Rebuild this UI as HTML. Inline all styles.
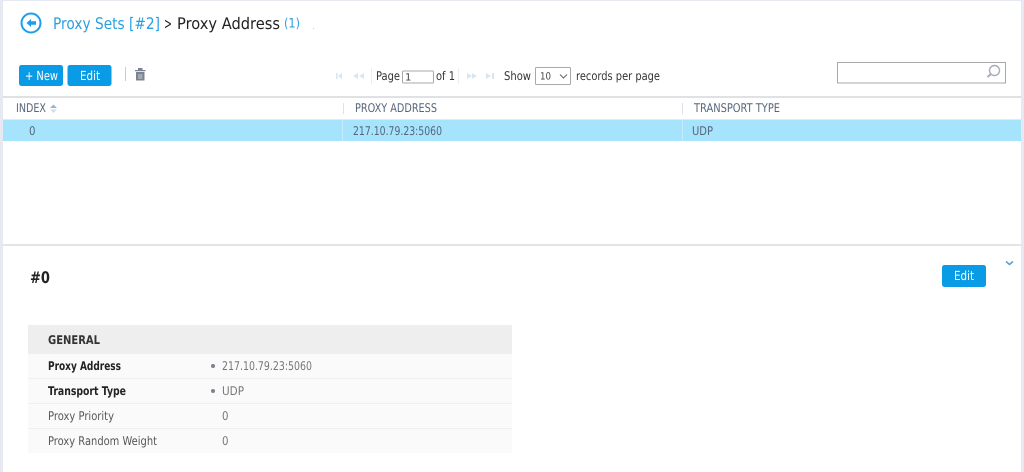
<!DOCTYPE html>
<html lang="en">
<head>
<meta charset="utf-8">
<title>Proxy Address</title>
<style>
html,body{margin:0;padding:0;width:1024px;height:472px;overflow:hidden;background:#fff}
svg{display:block}
text{font-family:"DejaVu Sans",sans-serif;font-size:12px;fill:#4f5b66;text-rendering:geometricPrecision}
.h{fill:#55657a}
.b{font-weight:bold;fill:#222;font-size:12px}
.w{fill:#fff;font-size:12.5px}
</style>
</head>
<body>
<svg width="1024" height="472" viewBox="0 0 1024 472" xmlns="http://www.w3.org/2000/svg">
<rect width="1024" height="472" fill="#fff"/>
<rect x="0" y="0" width="3" height="472" fill="#e6e9f2"/>
<rect x="0" y="0" width="1024" height="1" fill="#e6e9f2"/>
<rect x="1021" y="0" width="3" height="472" fill="#e6e9f2"/>

<circle cx="31" cy="23" r="9.500" fill="none" stroke="#1b9fe8" stroke-width="2"/>
<path d="M26.500 23 L31 19 V21.300 H36 V24.700 H31 V27 Z" fill="#1b9fe8"/>
<text x="53" y="29" style="font-size:16px;fill:#2a9fe0" textLength="107" lengthAdjust="spacingAndGlyphs">Proxy Sets [#2]</text>
<text x="164" y="29" style="font-size:16px;fill:#222" textLength="8" lengthAdjust="spacingAndGlyphs">&gt;</text>
<text x="177" y="29" style="font-size:16px;fill:#222" textLength="103" lengthAdjust="spacingAndGlyphs">Proxy Address</text>
<text x="284" y="27.500" style="font-size:13px;fill:#2a9fe0" textLength="16" lengthAdjust="spacingAndGlyphs">(1)</text>
<rect x="313" y="28" width="1" height="1" fill="#c8d0d8"/>

<rect x="19" y="65" width="44" height="21" rx="2.500" fill="#0a9be6"/>
<text class="w" x="25" y="80" textLength="33" lengthAdjust="spacingAndGlyphs">+ New</text>
<rect x="67.500" y="65" width="44" height="21" rx="2.500" fill="#0a9be6"/>
<text class="w" x="80" y="80" textLength="20" lengthAdjust="spacingAndGlyphs">Edit</text>
<rect x="125" y="67" width="1" height="14" fill="#c9ccd1"/>
<path d="M135 70H145.500V71.300H135Z M138 68H142.500V70H138Z" fill="#7b8391"/>
<rect x="136" y="72" width="8.500" height="8.500" fill="#7b8391"/>
<rect x="138" y="74" width="4.500" height="5" fill="#a3a9b4"/>

<g fill="#d9e6f1">
<path d="M336 73H337.500V79H336Z M338 76L342 73V79Z"/>
<path d="M353 76L358 73V79Z M359 76L364 73V79Z"/>
<path d="M467 73L472 76L467 79Z M472 73L477 76L472 79Z"/>
<path d="M486 73L491 76L486 79Z M492 73H494V79H492Z"/>
</g>
<rect x="371" y="68" width="1" height="16" fill="#eceef1"/>
<rect x="458" y="68" width="1" height="16" fill="#eceef1"/>
<text x="376" y="80" style="fill:#333" textLength="24" lengthAdjust="spacingAndGlyphs">Page</text>
<rect x="402.500" y="71" width="31" height="12" rx="1" fill="#fff" stroke="#a9a9a9"/>
<text x="405" y="80.500" style="font-size:10px;fill:#444">1</text>
<text x="436" y="80" style="fill:#333" textLength="19" lengthAdjust="spacingAndGlyphs">of 1</text>
<text x="504" y="80" style="fill:#333" textLength="27" lengthAdjust="spacingAndGlyphs">Show</text>
<rect x="535.500" y="67.500" width="35" height="17" rx="1" fill="#fff" stroke="#a9a9a9"/>
<text x="540" y="79.500" style="font-size:10px;fill:#444" textLength="11" lengthAdjust="spacingAndGlyphs">10</text>
<path d="M560 74.500L563.500 78L567 74.500" fill="none" stroke="#666" stroke-width="1"/>
<text x="576" y="80" style="fill:#333" textLength="84" lengthAdjust="spacingAndGlyphs">records per page</text>

<rect x="837.500" y="62.500" width="168" height="20.500" fill="#fff" stroke="#a9a9a9"/>
<circle cx="994.500" cy="70.500" r="5" fill="none" stroke="#a7adb8" stroke-width="1.400"/>
<path d="M990.800 74.200L987.500 77" stroke="#a7adb8" stroke-width="2" fill="none"/>

<rect x="3" y="96" width="1018" height="2" fill="#dfe1e5"/>
<rect x="3" y="119" width="1018" height="1" fill="#e8e8e8"/>
<text class="h" x="16" y="112" textLength="30" lengthAdjust="spacingAndGlyphs">INDEX</text>
<path d="M50 108L53.500 104.500L57 108Z" fill="#8fb8d8"/>
<path d="M50 109.500L53.500 113L57 109.500Z" fill="#d5dde6"/>
<rect x="343" y="103" width="1" height="11" fill="#dfe1e5"/>
<text class="h" x="355" y="112" textLength="82" lengthAdjust="spacingAndGlyphs">PROXY ADDRESS</text>
<rect x="682" y="103" width="1" height="11" fill="#dfe1e5"/>
<text class="h" x="694" y="112" textLength="86" lengthAdjust="spacingAndGlyphs">TRANSPORT TYPE</text>

<rect x="3" y="120" width="1018" height="21" fill="#a6e3fd"/>
<rect x="342" y="120" width="1" height="21" fill="#c5ecfd"/>
<rect x="682" y="120" width="1" height="21" fill="#c5ecfd"/>
<text x="29" y="135" class="h" textLength="6.500" lengthAdjust="spacingAndGlyphs">0</text>
<text x="353" y="135" class="h" textLength="89" lengthAdjust="spacingAndGlyphs">217.10.79.23:5060</text>
<text x="692" y="135" class="h" textLength="21" lengthAdjust="spacingAndGlyphs">UDP</text>

<rect x="3" y="244" width="1018" height="2" fill="#e4e4e4"/>
<text x="30" y="283" style="font-size:16px;font-weight:bold;fill:#222" textLength="20" lengthAdjust="spacingAndGlyphs">#0</text>
<rect x="942" y="265" width="44" height="22" rx="2.500" fill="#0a9be6"/>
<text class="w" x="954" y="280" textLength="20" lengthAdjust="spacingAndGlyphs">Edit</text>
<path d="M1006 261.500L1009.500 264.500L1013 261.500" fill="none" stroke="#5b9fd6" stroke-width="1.600"/>

<rect x="28" y="325" width="484" height="29" fill="#eeeeee"/>
<rect x="28" y="354" width="484" height="99" fill="#fafafa"/>
<rect x="28" y="378" width="484" height="1" fill="#f0f0f0"/>
<rect x="28" y="403" width="484" height="1" fill="#f0f0f0"/>
<rect x="28" y="428" width="484" height="1" fill="#f0f0f0"/>
<text x="48" y="344" style="font-weight:bold;fill:#333;font-size:12px" textLength="52" lengthAdjust="spacingAndGlyphs">GENERAL</text>
<text class="b" x="48" y="370" textLength="73" lengthAdjust="spacingAndGlyphs">Proxy Address</text>
<text class="b" x="48" y="395" textLength="78" lengthAdjust="spacingAndGlyphs">Transport Type</text>
<text x="48" y="420" style="fill:#555" textLength="66" lengthAdjust="spacingAndGlyphs">Proxy Priority</text>
<text x="48" y="445" style="fill:#555" textLength="109" lengthAdjust="spacingAndGlyphs">Proxy Random Weight</text>
<circle cx="213" cy="366" r="2" fill="#7b8391"/>
<circle cx="213" cy="391" r="2" fill="#7b8391"/>
<text x="222" y="370" style="fill:#777" textLength="90" lengthAdjust="spacingAndGlyphs">217.10.79.23:5060</text>
<text x="222" y="395" style="fill:#777" textLength="22" lengthAdjust="spacingAndGlyphs">UDP</text>
<text x="222" y="420" style="fill:#777" textLength="6.500" lengthAdjust="spacingAndGlyphs">0</text>
<text x="222" y="445" style="fill:#777" textLength="6.500" lengthAdjust="spacingAndGlyphs">0</text>
</svg>
</body>
</html>
